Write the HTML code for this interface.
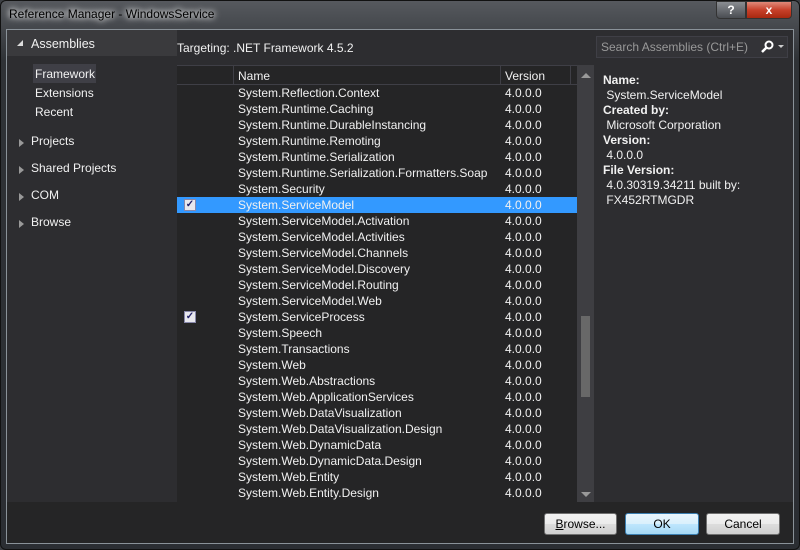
<!DOCTYPE html>
<html><head><style>
*{margin:0;padding:0;box-sizing:border-box}
body{width:800px;height:550px;overflow:hidden;background:#3c3f44;font-family:"Liberation Sans",sans-serif;font-size:12px;color:#f1f1f1;position:relative}
.abs{position:absolute}
.title{left:9px;top:7px;color:#000;font-size:12px;text-shadow:0 0 8px #fff,0 0 6px #fff}
.frame{left:0;top:0;width:800px;height:550px;background:linear-gradient(#56595e,#2f3236 60px,#2b2e33);border:1px solid #111;border-radius:6px}
.client{left:6px;top:29px;width:788px;height:515px;background:#252526;border:1px solid #8a9299}
.left{left:7px;top:30px;width:170px;height:472px;background:#2d2d30}
.hdr{left:7px;top:30px;width:170px;height:26px;background:#3a3a3d}
.right{left:594px;top:30px;width:199px;height:472px;background:#2d2d30}
.mid{left:177px;top:30px;width:417px;height:35px;background:#2d2d30}
.list{left:177px;top:65px;width:400px;height:437px;background:#252526;overflow:hidden}
.row{height:16px;line-height:16px;position:relative;white-space:nowrap}
.row .n{position:absolute;left:61px}
.row .v{position:absolute;left:328px}
.sel{background:#3399ff}
.cb{position:absolute;left:7px;top:2px;width:12px;height:12px;background:#e8e8ee;border:1px solid #8888aa;color:#22226a;font-size:10px;line-height:10px;text-align:center;font-weight:bold}
.tri{display:inline-block;width:0;height:0;border-top:4px solid transparent;border-bottom:4px solid transparent;border-left:5px solid #999}
.btn{height:22px;top:513px;border:1px solid #707070;border-radius:3px;background:linear-gradient(#f2f2f2,#ebebeb 50%,#dddddd 51%,#cfcfcf);color:#000;text-align:center;line-height:20px;font-size:12px}
</style></head><body>
<div class="abs frame"></div>
<div class="abs title">Reference Manager - WindowsService</div>
<div class="abs" style="left:716px;top:1px;width:30px;height:18px;border:1px solid #333;border-radius:0 0 0 4px;background:linear-gradient(#8a8d92,#4a4d52);color:#fff;text-align:center;font-weight:bold;line-height:16px">?</div>
<div class="abs" style="left:746px;top:1px;width:46px;height:18px;border:1px solid #333;border-radius:0 0 4px 0;background:linear-gradient(#e08a7a,#c7402a 50%,#a82810);color:#fff;text-align:center;font-weight:bold;line-height:16px">x</div>
<div class="abs client"></div>
<div class="abs left"></div>
<div class="abs hdr"></div>
<div class="abs right"></div>
<div class="abs mid"></div>
<div class="abs" style="left:17px;top:40px;width:0;height:0;border-left:6px solid transparent;border-bottom:6px solid #ddd"></div>
<div class="abs" style="left:31px;top:37px;font-size:12.5px">Assemblies</div>
<div class="abs" style="left:33px;top:64px;width:63px;height:19px;background:#3f3f46"></div>
<div class="abs" style="left:35px;top:67px">Framework</div>
<div class="abs" style="left:35px;top:86px">Extensions</div>
<div class="abs" style="left:35px;top:105px">Recent</div>
<div class="abs" style="left:19px;top:136px"><span class="tri"></span></div><div class="abs" style="left:31px;top:134px">Projects</div>
<div class="abs" style="left:19px;top:163px"><span class="tri"></span></div><div class="abs" style="left:31px;top:161px">Shared Projects</div>
<div class="abs" style="left:19px;top:190px"><span class="tri"></span></div><div class="abs" style="left:31px;top:188px">COM</div>
<div class="abs" style="left:19px;top:217px"><span class="tri"></span></div><div class="abs" style="left:31px;top:215px">Browse</div>
<div class="abs" style="left:177px;top:41px">Targeting: .NET Framework 4.5.2</div>
<div class="abs" style="left:596px;top:36px;width:192px;height:22px;background:#333337;border:1px solid #3f3f46"></div>
<div class="abs" style="left:601px;top:40px;color:#999">Search Assemblies (Ctrl+E)</div>
<svg class="abs" style="left:760px;top:39px" width="28" height="16"><circle cx="9" cy="6" r="3.5" fill="none" stroke="#fff" stroke-width="2"/><line x1="6.5" y1="8.5" x2="2" y2="13" stroke="#fff" stroke-width="2.5"/><path d="M18 6h6l-3 3z" fill="#ccc"/></svg>
<div class="abs list">
<div style="height:20px;border-top:1px solid #3f3f46;border-bottom:1px solid #3f3f46;position:relative">
<div style="position:absolute;left:56px;top:0;height:19px;border-left:1px solid #3f3f46"></div>
<div style="position:absolute;left:323px;top:0;height:19px;border-left:1px solid #3f3f46"></div>
<div style="position:absolute;left:393px;top:0;height:19px;border-left:1px solid #3f3f46"></div>
<span style="position:absolute;left:61px;top:3px">Name</span><span style="position:absolute;left:328px;top:3px">Version</span>
</div>
<div class="row"><span class="n">System.Reflection.Context</span><span class="v">4.0.0.0</span></div>
<div class="row"><span class="n">System.Runtime.Caching</span><span class="v">4.0.0.0</span></div>
<div class="row"><span class="n">System.Runtime.DurableInstancing</span><span class="v">4.0.0.0</span></div>
<div class="row"><span class="n">System.Runtime.Remoting</span><span class="v">4.0.0.0</span></div>
<div class="row"><span class="n">System.Runtime.Serialization</span><span class="v">4.0.0.0</span></div>
<div class="row"><span class="n">System.Runtime.Serialization.Formatters.Soap</span><span class="v">4.0.0.0</span></div>
<div class="row"><span class="n">System.Security</span><span class="v">4.0.0.0</span></div>
<div class="row sel"><span class="cb">✓</span><span class="n">System.ServiceModel</span><span class="v">4.0.0.0</span></div>
<div class="row"><span class="n">System.ServiceModel.Activation</span><span class="v">4.0.0.0</span></div>
<div class="row"><span class="n">System.ServiceModel.Activities</span><span class="v">4.0.0.0</span></div>
<div class="row"><span class="n">System.ServiceModel.Channels</span><span class="v">4.0.0.0</span></div>
<div class="row"><span class="n">System.ServiceModel.Discovery</span><span class="v">4.0.0.0</span></div>
<div class="row"><span class="n">System.ServiceModel.Routing</span><span class="v">4.0.0.0</span></div>
<div class="row"><span class="n">System.ServiceModel.Web</span><span class="v">4.0.0.0</span></div>
<div class="row"><span class="cb">✓</span><span class="n">System.ServiceProcess</span><span class="v">4.0.0.0</span></div>
<div class="row"><span class="n">System.Speech</span><span class="v">4.0.0.0</span></div>
<div class="row"><span class="n">System.Transactions</span><span class="v">4.0.0.0</span></div>
<div class="row"><span class="n">System.Web</span><span class="v">4.0.0.0</span></div>
<div class="row"><span class="n">System.Web.Abstractions</span><span class="v">4.0.0.0</span></div>
<div class="row"><span class="n">System.Web.ApplicationServices</span><span class="v">4.0.0.0</span></div>
<div class="row"><span class="n">System.Web.DataVisualization</span><span class="v">4.0.0.0</span></div>
<div class="row"><span class="n">System.Web.DataVisualization.Design</span><span class="v">4.0.0.0</span></div>
<div class="row"><span class="n">System.Web.DynamicData</span><span class="v">4.0.0.0</span></div>
<div class="row"><span class="n">System.Web.DynamicData.Design</span><span class="v">4.0.0.0</span></div>
<div class="row"><span class="n">System.Web.Entity</span><span class="v">4.0.0.0</span></div>
<div class="row"><span class="n">System.Web.Entity.Design</span><span class="v">4.0.0.0</span></div>
</div>
<div class="abs" style="left:577px;top:65px;width:17px;height:437px;background:#3e3e42"></div>
<div class="abs" style="left:581px;top:73px;width:0;height:0;border-left:5px solid transparent;border-right:5px solid transparent;border-bottom:5px solid #999"></div>
<div class="abs" style="left:581px;top:492px;width:0;height:0;border-left:5px solid transparent;border-right:5px solid transparent;border-top:5px solid #999"></div>
<div class="abs" style="left:581px;top:316px;width:9px;height:81px;background:#686868"></div>
<div class="abs" style="left:603px;top:73px;line-height:15px">
<b>Name:</b><br>&nbsp;System.ServiceModel<br><b>Created by:</b><br>&nbsp;Microsoft Corporation<br><b>Version:</b><br>&nbsp;4.0.0.0<br><b>File Version:</b><br>&nbsp;4.0.30319.34211 built by:<br>&nbsp;FX452RTMGDR</div>
<div class="abs btn" style="left:544px;width:73px"><u>B</u>rowse...</div>
<div class="abs btn" style="left:625px;width:74px;border-color:#3c7fb1;background:linear-gradient(#eaf6fd,#d9f0fc 50%,#bee6fd 51%,#a7d9f5)">OK</div>
<div class="abs btn" style="left:706px;width:74px">Cancel</div>
</body></html>
